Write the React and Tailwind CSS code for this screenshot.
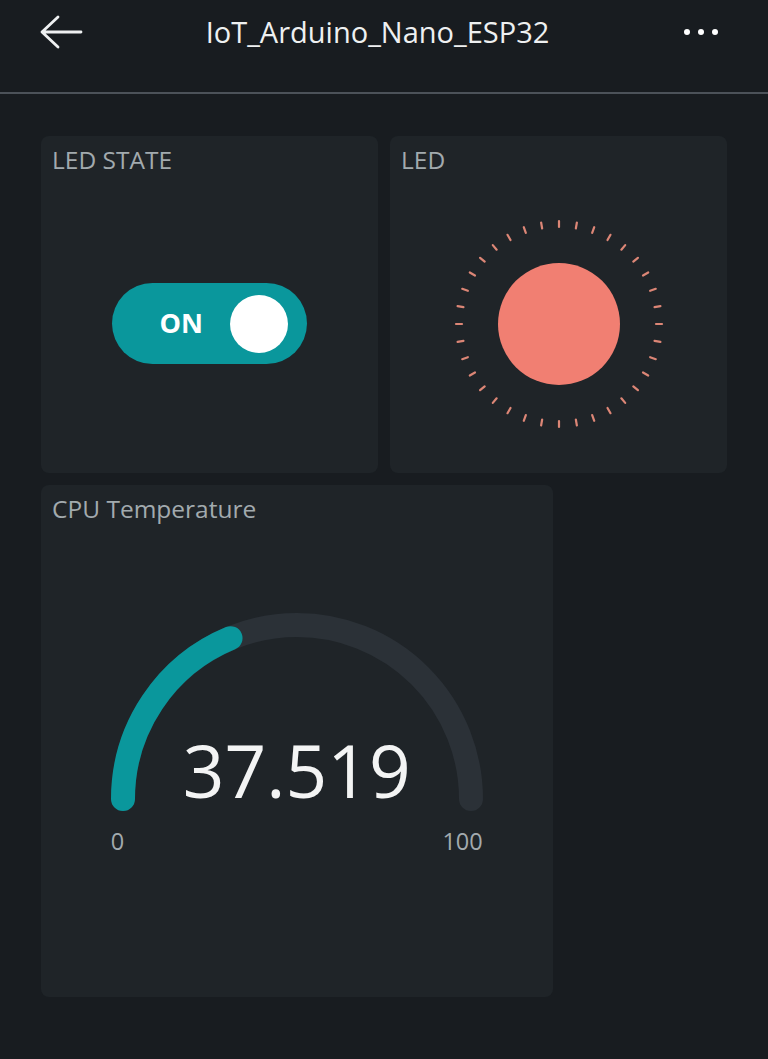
import { useMemo } from "react";

const font = { fontFamily: '"Open Sans", "Noto Sans", sans-serif' };

function BackArrow() {
  return (
    <svg width="44" height="36" viewBox="0 0 44 36" fill="none">
      <path
        d="M3 18H42M19 3L3 18L19 33"
        stroke="#eef0f1"
        strokeWidth="2.8"
        strokeLinecap="round"
        strokeLinejoin="round"
      />
    </svg>
  );
}

function Card({ title, className = "", children }) {
  return (
    <div className={"flex flex-col rounded-lg bg-[#1f2428] " + className}>
      <div className="pl-[11px] pt-[8px] text-[24.5px] leading-[32px] text-[#a2aaae]">
        {title}
      </div>
      {children}
    </div>
  );
}

function Toggle({ on }) {
  return (
    <div className="flex h-[81px] w-[195px] items-center justify-end rounded-full bg-[#0a979c] pr-[19px]">
      <span className="mr-[27px] text-[27px] font-bold text-white">
        {on ? "ON" : "OFF"}
      </span>
      <div className="size-[58px] rounded-full bg-white" />
    </div>
  );
}

function Led() {
  // 36 short ticks around the lamp, one every 10 degrees
  const ticks = useMemo(
    () =>
      Array.from({ length: 36 }, (_, i) => {
        const a = (i * 10 * Math.PI) / 180;
        return {
          x1: 110 + 97 * Math.cos(a),
          y1: 110 + 97 * Math.sin(a),
          x2: 110 + 103 * Math.cos(a),
          y2: 110 + 103 * Math.sin(a),
        };
      }),
    []
  );

  return (
    <svg width="220" height="220" viewBox="0 0 220 220">
      {ticks.map((t, i) => (
        <line
          key={i}
          {...t}
          stroke="#dc8676"
          strokeWidth="2.2"
          strokeLinecap="round"
        />
      ))}
      <circle cx="110" cy="110" r="61" fill="#f17f72" />
    </svg>
  );
}

function Gauge({ value, min = 0, max = 100 }) {
  const r = 174;
  const cx = 186;
  const cy = 186;
  const frac = (value - min) / (max - min);
  const angle = Math.PI * frac;
  const ex = cx - r * Math.cos(angle);
  const ey = cy - r * Math.sin(angle);

  return (
    <div className="flex w-[372px] flex-col">
      <div className="relative h-[200px]">
        <svg width="372" height="200" viewBox="0 0 372 200">
          <path
            d={`M ${cx - r} ${cy} A ${r} ${r} 0 0 1 ${cx + r} ${cy}`}
            fill="none"
            stroke="#2b3137"
            strokeWidth="24"
            strokeLinecap="round"
          />
          <path
            d={`M ${cx - r} ${cy} A ${r} ${r} 0 0 1 ${ex} ${ey}`}
            fill="none"
            stroke="#0a979c"
            strokeWidth="24"
            strokeLinecap="round"
          />
        </svg>
        <div className="absolute left-0 right-0 top-[120px] text-center text-[73px] leading-none text-[#f3f4f4]">
          {value}
        </div>
      </div>
      <div className="mt-[13px] flex justify-between text-[23.5px] leading-[30px] text-[#a2aaae]">
        <span>{min}</span>
        <span>{max}</span>
      </div>
    </div>
  );
}

export default function App() {
  return (
    <div className="min-h-[1059px] bg-[#181c20]" style={font}>
      <div className="flex h-[92px] items-center pb-[28px] pl-[39px] pr-[50px]">
        <BackArrow />
        <div className="flex-1 pr-[12px] text-center text-[29px] text-[#eef0f1]">
          IoT_Arduino_Nano_ESP32
        </div>
        <div className="flex gap-[8px]">
          <div className="size-[6px] rounded-full bg-white" />
          <div className="size-[6px] rounded-full bg-white" />
          <div className="size-[6px] rounded-full bg-white" />
        </div>
      </div>
      <div className="h-[2px] bg-[#4c5259]" />

      <div className="grid auto-rows-[162.5px] grid-cols-4 gap-3 px-[41px] pt-[42px]">
        <Card title="LED STATE" className="col-span-2 row-span-2">
          <div className="flex flex-1 items-center justify-center pb-[2px]">
            <Toggle on />
          </div>
        </Card>
        <Card title="LED" className="col-span-2 row-span-2">
          <div className="flex flex-1 items-center justify-center pb-[2px]">
            <Led />
          </div>
        </Card>
        <Card title="CPU Temperature" className="col-span-3 row-span-3">
          <div className="flex justify-center pt-[88px]">
            <Gauge value={37.519} />
          </div>
        </Card>
      </div>
    </div>
  );
}
